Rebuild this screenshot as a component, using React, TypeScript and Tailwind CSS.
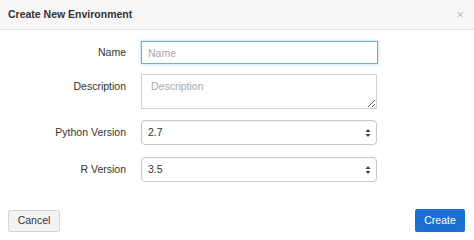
import type { ReactNode } from 'react'

function Field({ label, top, children }: { label: string; top?: boolean; children: ReactNode }) {
  return (
    <>
      <label className={`text-right text-[#333] ${top ? 'pt-[5px]' : 'self-center'}`}>{label}</label>
      {children}
    </>
  )
}

function Select({ value }: { value: string }) {
  return (
    <div className="flex h-[25px] w-[236px] items-center justify-between rounded-[4px] border border-[#c8c8c8] bg-white pl-[6px] pr-[5px] text-[#333] shadow-[inset_0_1px_1px_rgba(0,0,0,0.04)]">
      <span>{value}</span>
      <svg width="6" height="10" viewBox="0 0 6 10" className="fill-[#444]">
        <path d="M3 1 L5.5 4 H0.5 Z" />
        <path d="M3 9 L5.5 6 H0.5 Z" />
      </svg>
    </div>
  )
}

export default function App() {
  return (
    <div className="flex h-[236px] w-[474px] flex-col bg-white text-[10.5px] font-['Liberation_Sans',Arial,sans-serif]">
      <div className="flex h-[30px] items-center justify-between border-b border-[#e2e2e2] bg-[#f7f7f7] pl-[8px] pr-[10px]">
        <h2 className="font-bold text-[#333]">Create New Environment</h2>
        <span className="text-[13px] leading-none text-[#bbb]">×</span>
      </div>
      <div className="grid grid-cols-[126px_237px] gap-x-[15px] pt-[11px]">
        <Field label="Name">
          <input
            className="h-[23px] w-[237px] border border-[#66afe9] px-[6px] text-[#333] shadow-[0_0_3px_rgba(102,175,233,0.6)] outline-none placeholder:text-[#a8a8a8]"
            placeholder="Name"
          />
        </Field>
        <div className="col-span-2 h-[10px]" />
        <Field label="Description" top>
          <textarea
            className="h-[35px] w-[236px] border border-[#d0d0d0] px-[9px] pt-[4px] text-[#333] outline-none placeholder:text-[#a8a8a8]"
            placeholder="Description"
          />
        </Field>
        <div className="col-span-2 h-[11px]" />
        <Field label="Python Version">
          <Select value="2.7" />
        </Field>
        <div className="col-span-2 h-[12px]" />
        <Field label="R Version">
          <Select value="3.5" />
        </Field>
      </div>
      <div className="mt-[27px] flex items-center justify-between pl-[8px] pr-[9px]">
        <button className="h-[22px] w-[52px] rounded-[2px] border border-[#d6d6d6] bg-[#f3f3f3] text-[#333]">Cancel</button>
        <button className="h-[23px] w-[50px] rounded-[2px] bg-[#1b6fd1] text-white">Create</button>
      </div>
    </div>
  )
}
